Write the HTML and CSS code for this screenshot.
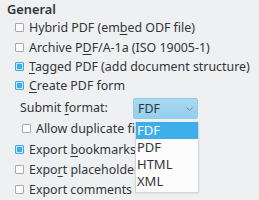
FILE: index.html
```html
<!DOCTYPE html>
<html>
<head>
<meta charset="utf-8">
<link rel="stylesheet" href="styles.css">
</head>
<body>
<div class="page">
  <div class="header">General</div>
  <div class="row"><span class="cb"></span><span class="lbl">Hybrid PDF (em<u>b</u>ed ODF file)</span></div>
  <div class="row"><span class="cb"></span><span class="lbl">Archive P<u>D</u>F/A-1a (ISO 19005-1)</span></div>
  <div class="row"><span class="cb on"></span><span class="lbl"><u>T</u>agged PDF (add document structure)</span></div>
  <div class="row"><span class="cb on"></span><span class="lbl"><u>C</u>reate PDF form</span></div>
  <div class="row submit">
    <span class="lbl sublbl">Submit <u>f</u>ormat:</span>
    <div class="combo">
      <span>FDF</span>
      <svg class="chev" width="7" height="4" viewBox="0 0 7 4"><path d="M0.5 0.5 L3.5 3.3 L6.5 0.5" fill="none" stroke="#7f8c8d" stroke-width="1"/></svg>
    </div>
  </div>
  <div class="row r21 sub"><span class="cb"></span><span class="lbl">Allow duplicate field names</span></div>
  <div class="row r21"><span class="cb on"></span><span class="lbl">Export <u>b</u>ookmarks</span></div>
  <div class="row r21"><span class="cb"></span><span class="lbl">Expo<u>r</u>t placeholders</span></div>
  <div class="row r21"><span class="cb"></span><span class="lbl">Export comments</span></div>
  <div class="popup">
    <div class="item sel">FDF</div>
    <div class="item">PDF</div>
    <div class="item">HTML</div>
    <div class="item">XML</div>
  </div>
</div>
</body>
</html>
```
FILE: styles.css
```css
html, body {
  margin: 0;
  padding: 0;
  background: #eff0f1;
  overflow: hidden;
}
.page {
  position: relative;
  width: 259px;
  height: 200px;
  font-family: "Noto Sans", sans-serif;
  font-size: 12.4px;
  color: #31363b;
  display: flex;
  flex-direction: column;
}
.header {
  height: 18px;
  line-height: 18px;
  padding-left: 7px;
  font-weight: 600;
  font-size: 12.8px;
}
.row {
  height: 20px;
  display: flex;
  align-items: center;
  padding-left: 15px;
  white-space: nowrap;
}
.r21 { height: 21px; }
.sub { padding-left: 22px; }
.cb {
  width: 7px;
  height: 7px;
  border: 1px solid #a7aaad;
  border-radius: 1px;
  background: #fcfcfc;
  margin-right: 5px;
  flex: none;
}
.cb.on {
  border-color: #3daee9;
  background: #3daee9;
  box-shadow: inset 0 0 0 1px #c9e7f7;
}
.lbl u {
  text-decoration-thickness: 1px;
  text-underline-offset: 2px;
}
.submit {
  height: 24px;
  padding-left: 20px;
}
.sublbl {
  width: 113px;
  flex: none;
}
.combo {
  width: 65px;
  height: 21px;
  margin-top: 2px;
  box-sizing: border-box;
  border: 1px solid #93cee9;
  border-radius: 2px;
  background: linear-gradient(#aad9f1, #95ceec);
  display: flex;
  align-items: center;
  justify-content: space-between;
  padding: 0 4px 0 4px;
  flex: none;
}
.chev { margin-top: 1px; }
.popup {
  position: absolute;
  left: 135px;
  top: 122px;
  width: 64px;
  background: #fcfcfc;
  border: 1px solid #d4d6d8;
  border-top: none;
  box-sizing: border-box;
  padding-bottom: 2px;
  box-shadow: 0 1px 2px rgba(0,0,0,0.08);
}
.item {
  height: 17px;
  line-height: 17px;
  padding-left: 1px;
  font-size: 13px;
}
.item.sel {
  background: #3daee9;
  color: #fcfcfc;
}
```
